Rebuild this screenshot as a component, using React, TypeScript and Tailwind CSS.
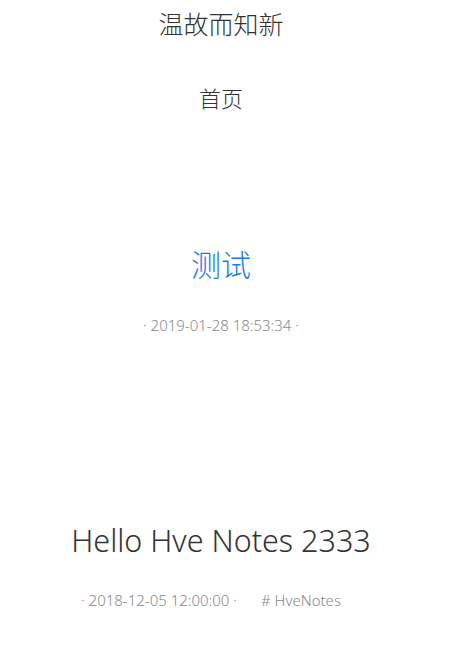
import React from 'react';

const posts = [
  { title: '测试', date: '2019-01-28 18:53:34', tags: [] as string[] },
  { title: 'Hello Hve Notes 2333', date: '2018-12-05 12:00:00', tags: ['HveNotes'] },
];

const font = { fontFamily: '"Noto Sans", "Noto Sans CJK SC", sans-serif' };

export default function App() {
  return (
    <div className="w-[442px] bg-white text-center font-light text-[#333]" style={font}>
      <header>
        <h1 className="text-[25px] leading-[48px] font-light">温故而知新</h1>
        <nav className="mt-[26px] text-[22px] leading-[48px]">
          <a href="#">首页</a>
        </nav>
      </header>
      <main>
        <article>
          <h2 className="mt-[123px] text-[30px] leading-[40px] font-light text-[#1e7be6]">
            <a href="#">{posts[0].title}</a>
          </h2>
          <div className="mt-[30px] text-[15px] leading-[20px] text-[#888]">· {posts[0].date} ·</div>
        </article>
        <article>
          <h2 className="mt-[182px] text-[30.5px] leading-[46px] font-light text-[#333]">
            <a href="#">{posts[1].title}</a>
          </h2>
          <div className="mt-[27px] flex justify-center gap-[24px] pr-[20px] text-[15px] leading-[20px] text-[#888]">
            <span>· {posts[1].date} ·</span>
            {posts[1].tags.map((t) => (
              <a key={t} href="#">
                # {t}
              </a>
            ))}
          </div>
        </article>
      </main>
    </div>
  );
}
